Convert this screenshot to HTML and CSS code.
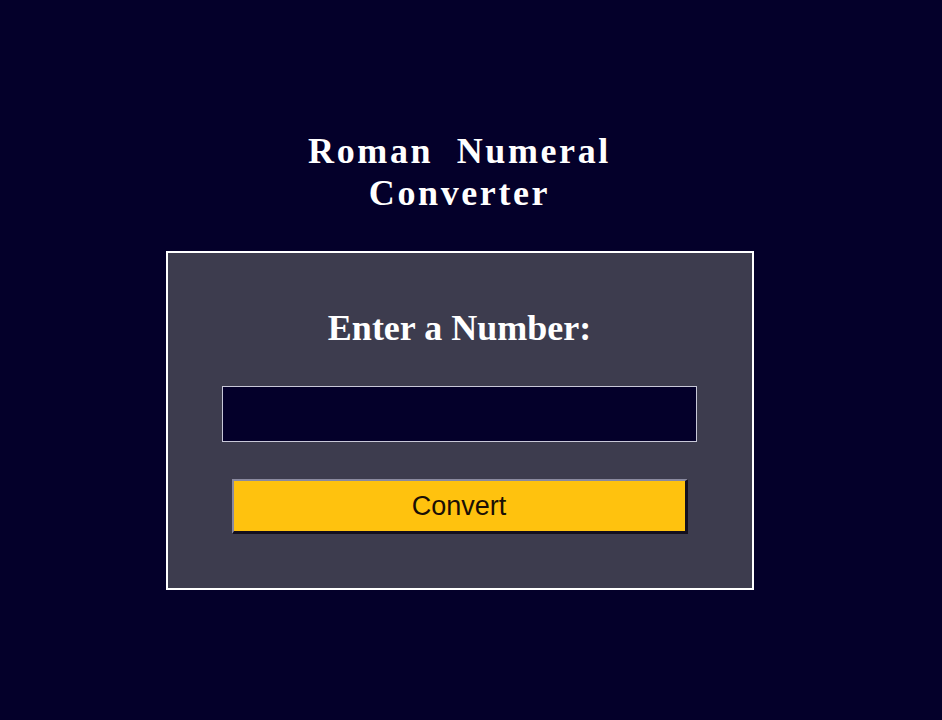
FILE: index.html
```html
<!DOCTYPE html>
<html lang="en">
<head>
<meta charset="utf-8">
<title>Roman Numeral Converter</title>
<link rel="stylesheet" href="styles.css">
</head>
<body>
<main class="page">
  <h1 class="title">Roman Numeral Converter</h1>
  <form class="card">
    <label class="label" for="number">Enter a Number:</label>
    <input class="number-input" id="number" type="number">
    <button class="convert-btn" type="button">Convert</button>
  </form>
</main>
</body>
</html>
```
FILE: styles.css
```css
html, body {
  margin: 0;
  padding: 0;
}
body {
  background: #04002a;
  color: #f5f6f7;
  font-family: "Liberation Serif", "Times New Roman", serif;
  height: 720px;
  overflow: hidden;
}
.page {
  display: flex;
  flex-direction: column;
  align-items: center;
  padding-right: 23px;
  padding-top: 130px;
}
.title {
  margin: 0;
  width: 420px;
  text-align: center;
  font-size: 36px;
  line-height: 42px;
  font-weight: bold;
  letter-spacing: 2.6px;
  word-spacing: 12px;
  color: #ffffff;
}
.card {
  margin-top: 37px;
  width: 584px;
  box-sizing: content-box;
  border: 2px solid #ffffff;
  background: #3d3c4e;
  padding: 55px 0 54px;
  display: flex;
  flex-direction: column;
  align-items: center;
}
.label {
  font-size: 36px;
  font-weight: bold;
  line-height: 41px;
  color: #ffffff;
}
.number-input {
  margin-top: 37px;
  width: 475px;
  height: 56px;
  box-sizing: border-box;
  background: #04002a;
  border: 1px solid #c8c8d8;
  color: #ffffff;
  font-size: 24px;
  padding: 0 10px;
  outline: none;
}
.convert-btn {
  margin-top: 37px;
  width: 456px;
  height: 55px;
  box-sizing: border-box;
  background: #ffc20e;
  border-style: solid;
  border-width: 2px 3px 3px 2px;
  border-color: #8a8aa0 #14101e #14101e #8a8aa0;
  color: #1a0f05;
  font-family: "Liberation Sans", Arial, sans-serif;
  font-size: 27px;
  padding: 0;
}
```
